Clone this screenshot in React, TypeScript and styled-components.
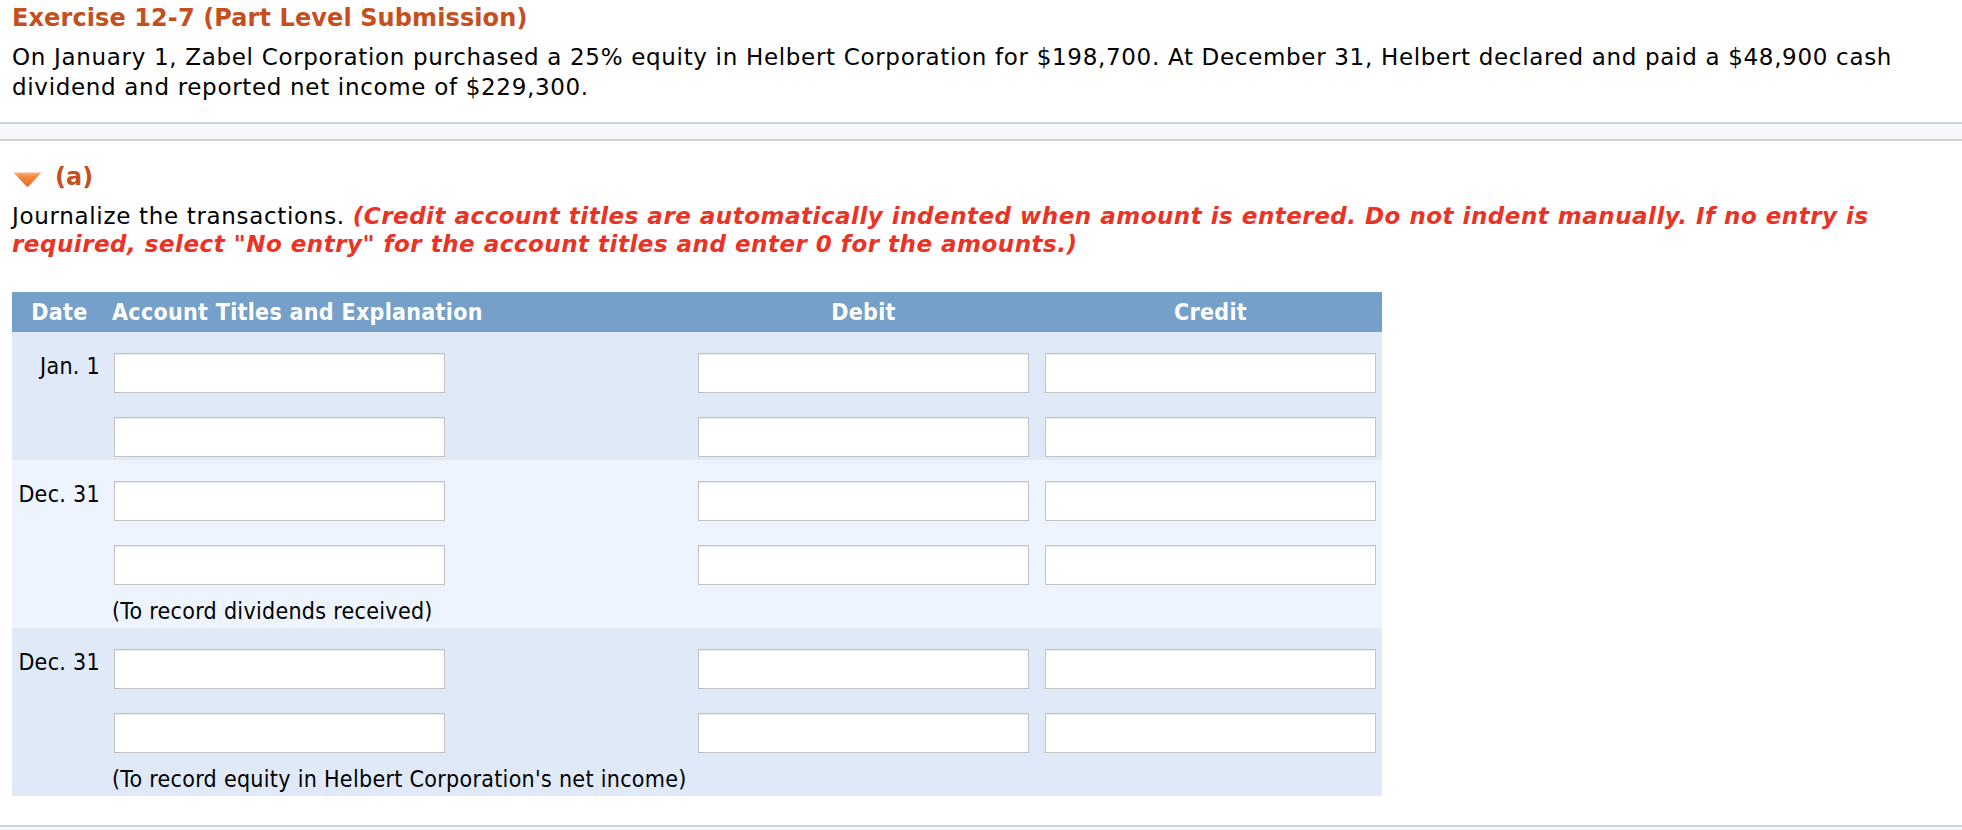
import React from 'react';
import styled, { createGlobalStyle } from 'styled-components';

const COLS = '102px 584px 347px 337px';

type Entry = {
    date: string
    lines: number
    memo?: string
}

const entries: Entry[] = [
    { date: 'Jan. 1', lines: 2 },
    { date: 'Dec. 31', lines: 2, memo: '(To record dividends received)' },
    { date: 'Dec. 31', lines: 2, memo: "(To record equity in Helbert Corporation's net income)" },
];

const Triangle = () => (
    <svg width="29" height="15" viewBox="0 0 29 15">
        <defs>
            <linearGradient id="tri" x1="0" y1="0" x2="0" y2="1">
                <stop offset="0" stopColor="#fbb27a" />
                <stop offset="0.3" stopColor="#f5893f" />
                <stop offset="1" stopColor="#ec6a1f" />
            </linearGradient>
        </defs>
        <path d="M0.5 0.5 L28.5 0.5 L15.5 14.5 L13.5 14.5 Z" fill="url(#tri)" />
    </svg>
)

export default function App() {
    return (
        <>
            <GlobalStyle />
            <Page>
                <Section>
                    <Title>Exercise 12-7 (Part Level Submission)</Title>
                    <Text $top={10} $lh={30}>
                        On January 1, Zabel Corporation purchased a 25% equity in Helbert Corporation for $198,700. At December 31, Helbert declared and paid a $48,900 cash dividend and reported net income of $229,300.
                    </Text>
                </Section>
                <Divider $top={20} />
                <Section>
                    <PartHeader>
                        <TriangleBox><Triangle /></TriangleBox>
                        <PartLabel>(a)</PartLabel>
                    </PartHeader>
                    <Text $top={11} $lh={28}>
                        Journalize the transactions.{' '}
                        <Note>
                            (Credit account titles are automatically indented when amount is entered. Do not indent manually. If no entry is required, select "No entry" for the account titles and enter 0 for the amounts.)
                        </Note>
                    </Text>
                    <Journal>
                        <HeaderRow>
                            <HeadCell $pad="0 7px 0 0" $align="center">Date</HeadCell>
                            <HeadCell $align="left" $shift={-2}>Account Titles and Explanation</HeadCell>
                            <HeadCell $width={331} $align="center">Debit</HeadCell>
                            <HeadCell $width={331} $align="center">Credit</HeadCell>
                        </HeaderRow>
                        {entries.map((entry, idx) => (
                            <EntryGroup $light={idx % 2 === 1} key={idx}>
                                {Array.from({ length: entry.lines }).map((_, i) => (
                                    <Line key={i}>
                                        <DateCell>{i === 0 ? entry.date : ''}</DateCell>
                                        <div><Field type="text" /></div>
                                        <div><Field type="text" /></div>
                                        <div><Field type="text" /></div>
                                    </Line>
                                ))}
                                {entry.memo && (
                                    <MemoLine>
                                        <span />
                                        <Memo>{entry.memo}</Memo>
                                    </MemoLine>
                                )}
                            </EntryGroup>
                        ))}
                    </Journal>
                </Section>
                <Divider $top={29} />
            </Page>
        </>
    )
}

const GlobalStyle = createGlobalStyle`
    body {
        margin: 0;
        background: #ffffff;
    }
`

const Page = styled.div`
    font-family: "DejaVu Sans", Verdana, sans-serif;
    color: #000;
`

const Section = styled.div`
    padding: 0 12px;
`

const Title = styled.h2`
    margin: 4px 0 0;
    font-size: 24px;
    line-height: 28px;
    font-weight: bold;
    letter-spacing: 0.1px;
    color: #c5501f;
`

const Text = styled.p<{ $top: number, $lh: number }>`
    margin: ${p => p.$top}px 0 0;
    font-size: 23px;
    line-height: ${p => p.$lh}px;
    letter-spacing: 0.68px;
`

const Note = styled.em`
    color: #eb3224;
    font-weight: bold;
    font-style: italic;
    letter-spacing: 0.5px;
`

const Divider = styled.div<{ $top: number }>`
    margin-top: ${p => p.$top}px;
    height: 15px;
    background: #f5f7f9;
    border-top: 2px solid #cdd4dc;
    border-bottom: 2px solid #cdd4dc;
`

const PartHeader = styled.div`
    margin-top: 22px;
    height: 28px;
    display: flex;
    align-items: center;
    gap: 13px;
`

const TriangleBox = styled.span`
    display: flex;
    margin: 5px 0 0 1px;
`

const PartLabel = styled.span`
    font-size: 24px;
    font-weight: bold;
    color: #c5501f;
`

const Journal = styled.div`
    margin-top: 34px;
    width: 1370px;
    font-family: "DejaVu Sans Condensed", Tahoma, sans-serif;
    font-size: 23px;
    letter-spacing: 0.3px;
`

const HeaderRow = styled.div`
    display: grid;
    grid-template-columns: ${COLS};
    height: 40px;
    line-height: 40px;
    background: #75a0c9;
    color: #ffffff;
    font-weight: bold;
    white-space: nowrap;
`

const HeadCell = styled.div<{ $align: string, $width?: number, $pad?: string, $shift?: number }>`
    text-align: ${p => p.$align};
    width: ${p => p.$width ? `${p.$width}px` : 'auto'};
    padding: ${p => p.$pad ?? '0'};
    margin-left: ${p => p.$shift ?? 0}px;
`

const EntryGroup = styled.div<{ $light: boolean }>`
    background: ${p => p.$light ? '#edf4fe' : '#e0e9f7'};
`

const Line = styled.div`
    display: grid;
    grid-template-columns: ${COLS};
    padding: 21px 0 3px;
    align-items: start;
`

const DateCell = styled.div`
    text-align: right;
    padding-right: 14px;
    line-height: normal;
    white-space: nowrap;
`

const Field = styled.input`
    display: block;
    box-sizing: border-box;
    width: 331px;
    height: 40px;
    margin: 0;
    padding: 0 6px;
    background: #ffffff;
    border: 1px solid #c2c2c2;
    box-shadow: inset 0 1px 0 #ececec;
    font: inherit;
    outline: none;
`

const MemoLine = styled.div`
    display: grid;
    grid-template-columns: ${COLS};
    height: 40px;
    box-sizing: border-box;
    padding-top: 10px;
`

const Memo = styled.div`
    grid-column: 2 / span 3;
    margin-left: -2px;
    line-height: normal;
    white-space: nowrap;
`
